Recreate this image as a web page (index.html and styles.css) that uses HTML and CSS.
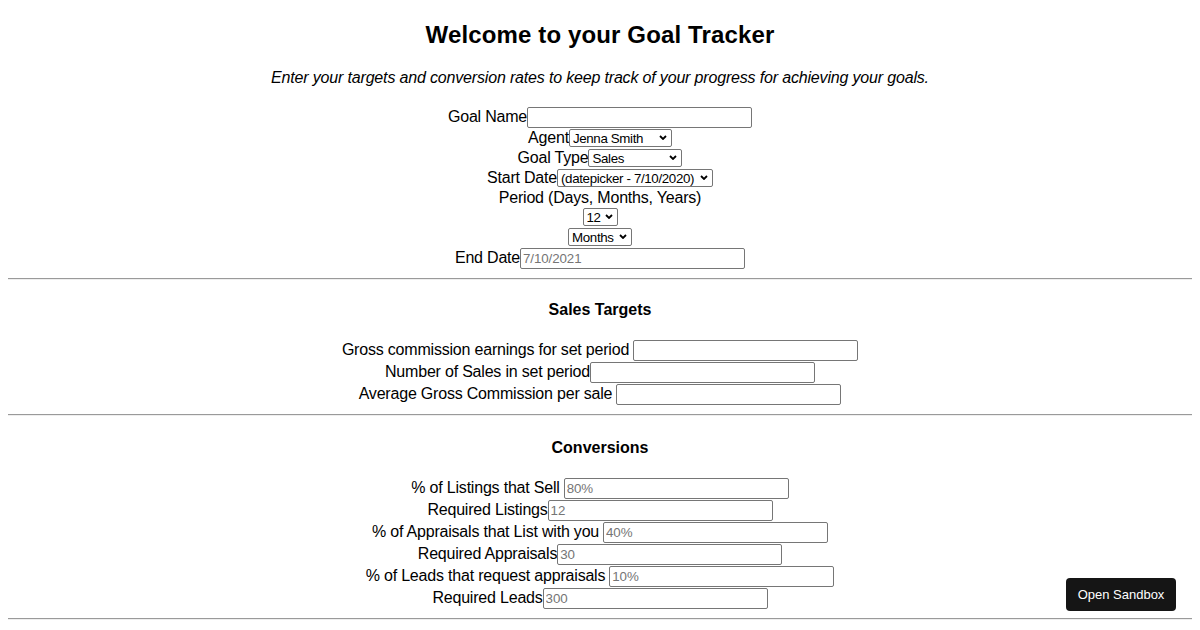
FILE: index.html
```
<!DOCTYPE html>
<html lang="en">
<head>
<meta charset="utf-8">
<title>Goal Tracker</title>
<link rel="stylesheet" href="styles.css">
</head>
<body>
<div class="page">
<h2 class="title">Welcome to your Goal Tracker</h2>
<p class="subtitle">Enter your targets and conversion rates to keep track of your progress for achieving your goals.</p>
<form class="form">
  <div class="row row-input"><span class="lbl">Goal Name</span><input type="text" class="field"></div>
  <div class="row row-select"><span class="lbl">Agent</span><span class="sel-wrap"><select class="sel sel-agent"><option>Jenna Smith</option></select><svg class="chev" viewBox="0 0 8 5" width="8" height="5"><path d="M1 1 L4 4 L7 1" fill="none" stroke="#000" stroke-width="1.8"/></svg></span></div>
  <div class="row row-select"><span class="lbl">Goal Type</span><span class="sel-wrap"><select class="sel sel-type"><option>Sales</option></select><svg class="chev" viewBox="0 0 8 5" width="8" height="5"><path d="M1 1 L4 4 L7 1" fill="none" stroke="#000" stroke-width="1.8"/></svg></span></div>
  <div class="row row-select"><span class="lbl">Start Date</span><span class="sel-wrap"><select class="sel sel-date"><option>(datepicker - 7/10/2020)</option></select><svg class="chev" viewBox="0 0 8 5" width="8" height="5"><path d="M1 1 L4 4 L7 1" fill="none" stroke="#000" stroke-width="1.8"/></svg></span></div>
  <div class="row row-text"><span class="lbl">Period (Days, Months, Years)</span></div>
  <div class="row row-select"><span class="sel-wrap"><select class="sel sel-num"><option>12</option></select><svg class="chev" viewBox="0 0 8 5" width="8" height="5"><path d="M1 1 L4 4 L7 1" fill="none" stroke="#000" stroke-width="1.8"/></svg></span></div>
  <div class="row row-select"><span class="sel-wrap"><select class="sel sel-unit"><option>Months</option></select><svg class="chev" viewBox="0 0 8 5" width="8" height="5"><path d="M1 1 L4 4 L7 1" fill="none" stroke="#000" stroke-width="1.8"/></svg></span></div>
  <div class="row row-input"><span class="lbl">End Date</span><input type="text" class="field" placeholder="7/10/2021"></div>
  <hr class="divider">
  <h4 class="section-title">Sales Targets</h4>
  <div class="row row-input"><span class="lbl gap">Gross commission earnings for set period</span><input type="text" class="field"></div>
  <div class="row row-input"><span class="lbl">Number of Sales in set period</span><input type="text" class="field"></div>
  <div class="row row-input"><span class="lbl gap">Average Gross Commission per sale</span><input type="text" class="field"></div>
  <hr class="divider">
  <h4 class="section-title section-conv">Conversions</h4>
  <div class="row row-input"><span class="lbl gap">% of Listings that Sell</span><input type="text" class="field" placeholder="80%"></div>
  <div class="row row-input"><span class="lbl">Required Listings</span><input type="text" class="field" placeholder="12"></div>
  <div class="row row-input"><span class="lbl gap">% of Appraisals that List with you</span><input type="text" class="field" placeholder="40%"></div>
  <div class="row row-input"><span class="lbl">Required Appraisals</span><input type="text" class="field" placeholder="30"></div>
  <div class="row row-input"><span class="lbl gap">% of Leads that request appraisals</span><input type="text" class="field" placeholder="10%"></div>
  <div class="row row-input"><span class="lbl">Required Leads</span><input type="text" class="field" placeholder="300"></div>
  <hr class="divider">
</form>
</div>
<button type="button" class="sandbox-btn">Open Sandbox</button>
</body>
</html>
```
FILE: styles.css
```
html, body {
  margin: 0;
  padding: 0;
  background: #fff;
}

body {
  font-family: "Liberation Sans", Arial, sans-serif;
  font-size: 16px;
  color: #000;
}

.page {
  padding: 0 8px;
}

.title {
  text-align: center;
  font-size: 24px;
  font-weight: bold;
  letter-spacing: 0.14px;
  margin: 21px 0 19.92px;
}

.subtitle {
  text-align: center;
  font-style: italic;
  letter-spacing: -0.17px;
  margin: 16px 0;
}

.form {
  margin: 0;
  padding-top: 4px;
}

.row {
  display: flex;
  justify-content: center;
  align-items: baseline;
  letter-spacing: -0.2px;
}

.row-input { height: 22px; }
.row-select { height: 20px; }
.row-text { height: 19px; }

.lbl {
  white-space: pre;
}

.lbl.gap {
  margin-right: 4px;
}

.field {
  width: 225px;
  height: 21px;
  box-sizing: border-box;
  margin: 0;
  padding: 1px 2px;
  border: 1px solid #767676;
  border-radius: 2px;
  background: #fff;
  font-family: "Liberation Sans", Arial, sans-serif;
  font-size: 13.33px;
  letter-spacing: -0.1px;
  color: #000;
}

.field::placeholder {
  color: #757575;
}

.sel-wrap {
  position: relative;
  display: inline-block;
}

.sel {
  -webkit-appearance: none;
  appearance: none;
  height: 18px;
  box-sizing: border-box;
  margin: 0;
  padding: 0 14px 0 3px;
  border: 1px solid #767676;
  border-radius: 2px;
  background: #fff;
  color: #000;
  font-family: "Liberation Sans", Arial, sans-serif;
  font-size: 13.33px;
  letter-spacing: -0.35px;
}

.chev {
  position: absolute;
  right: 5px;
  top: 6.5px;
  pointer-events: none;
}

.sel-agent { width: 103px; }
.sel-type { width: 94px; }
.sel-date { width: 156px; }
.sel-num { width: 35px; }
.sel-unit { width: 64px; }

.divider {
  margin: 8px 0;
  border: 0;
  border-top: 1px solid #9a9a9a;
  border-bottom: 1px solid #eeeeee;
}

.section-title {
  text-align: center;
  font-size: 16px;
  font-weight: bold;
  margin: 21.28px 0;
}

.section-conv {
  margin-top: 22.6px;
}

.sandbox-btn {
  position: fixed;
  right: 24px;
  bottom: 19px;
  width: 110px;
  height: 33px;
  padding: 0;
  border: 0;
  border-radius: 4px;
  background: #151515;
  color: #fff;
  font-family: "Liberation Sans", Arial, sans-serif;
  font-size: 13px;
  cursor: pointer;
}
```
